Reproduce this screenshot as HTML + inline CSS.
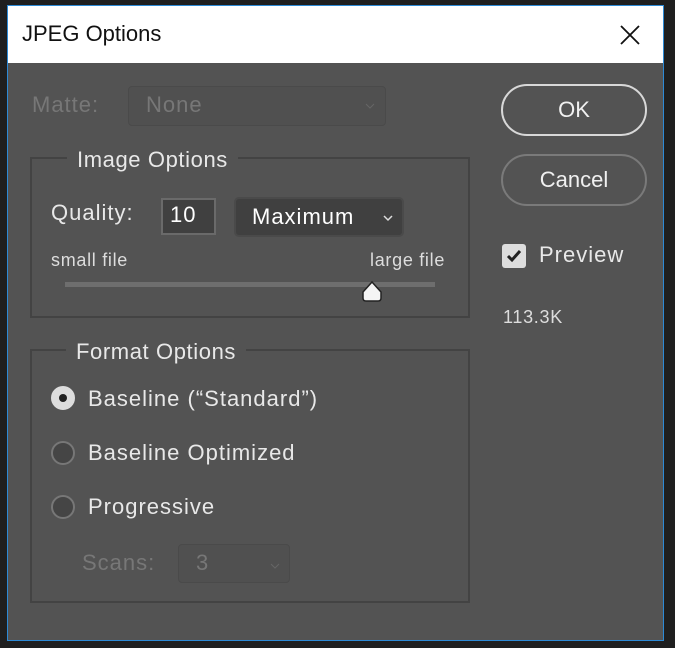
<!DOCTYPE html>
<html><head><meta charset="utf-8"><style>
*{margin:0;padding:0;box-sizing:border-box}
body{width:675px;height:648px;background:#1f1f1f;position:relative;overflow:hidden;font-family:"Liberation Sans",sans-serif}
.dlg{position:absolute;left:7px;top:5px;width:657px;height:636px;border:1px solid #2d8ad6;background:#535353}
.title{position:absolute;left:0;top:0;width:655px;height:57px;background:#fff}
.abs{position:absolute;white-space:nowrap}
.t{color:#e8e8e8;font-size:22px;letter-spacing:1px}
.dim{color:#777;font-size:22px;letter-spacing:1px}
.sm{color:#ddd;font-size:18px;letter-spacing:0.7px}
.grp{position:absolute;border:2px solid #434343}
.lg{position:absolute;background:#535353;padding:0 10px;color:#e8e8e8;font-size:22px;letter-spacing:0.6px}
.btn{position:absolute;border:2px solid #d8d8d8;border-radius:28px;color:#f0f0f0;font-size:22px;text-align:center}
.radio{position:absolute;width:24px;height:24px;border-radius:50%;border:2px solid #777;background:#454545}
</style></head><body>
<div class="dlg">
 <div class="title">
  <div class="abs" style="left:14px;top:15px;font-size:22px;color:#111">JPEG Options</div>
  <svg class="abs" style="left:611px;top:18px" width="22" height="22"><path d="M2 2L20 20M20 2L2 20" stroke="#111" stroke-width="1.8"/></svg>
 </div>
 <div class="abs dim" style="left:24px;top:86px">Matte:</div>
 <div class="abs" style="left:120px;top:80px;width:258px;height:40px;border:1px solid #4a4a4a;border-radius:4px;background:#505050"></div>
 <div class="abs dim" style="left:138px;top:86px">None</div>
 <svg class="abs" style="left:357px;top:97px" width="10" height="6"><path d="M1 1L5 5L9 1" stroke="#666" fill="none"/></svg>

 <div class="grp" style="left:22px;top:151px;width:440px;height:161px"></div>
 <div class="lg" style="left:59px;top:141px">Image Options</div>
 <div class="abs t" style="left:43px;top:194px">Quality:</div>
 <div class="abs" style="left:153px;top:192px;width:55px;height:37px;border:2px solid #6a6a6a;background:#404040"></div>
 <div class="abs t" style="left:162px;top:196px;color:#fff">10</div>
 <div class="abs" style="left:226px;top:191px;width:170px;height:40px;border:2px solid #4a4a4a;border-radius:5px;background:#404040"></div>
 <div class="abs t" style="left:244px;top:198px;color:#fff">Maximum</div>
 <svg class="abs" style="left:374px;top:208px" width="12" height="8"><path d="M2 2L6 6L10 2" stroke="#ddd" stroke-width="1.5" fill="none"/></svg>
 <div class="abs sm" style="left:43px;top:244px">small file</div>
 <div class="abs sm" style="left:362px;top:244px">large file</div>
 <div class="abs" style="left:57px;top:276px;width:370px;height:5px;background:#6e6e6e"></div>
 <svg class="abs" style="left:352px;top:274px" width="26" height="24"><path d="M12 2L3 12L3 18Q3 21 6 21L18 21Q21 21 21 18L21 12Z" fill="#f4f4f4" stroke="#222" stroke-width="1.5"/></svg>

 <div class="grp" style="left:22px;top:343px;width:440px;height:254px"></div>
 <div class="lg" style="left:58px;top:333px">Format Options</div>
 <div class="radio" style="left:43px;top:380px;background:#ddd;border-color:#ddd"></div>
 <div class="abs" style="left:51px;top:388px;width:8px;height:8px;border-radius:50%;background:#222"></div>
 <div class="abs t" style="left:80px;top:380px">Baseline (“Standard”)</div>
 <div class="radio" style="left:43px;top:435px"></div>
 <div class="abs t" style="left:80px;top:434px">Baseline Optimized</div>
 <div class="radio" style="left:43px;top:489px"></div>
 <div class="abs t" style="left:80px;top:488px">Progressive</div>
 <div class="abs dim" style="left:74px;top:544px">Scans:</div>
 <div class="abs" style="left:170px;top:538px;width:112px;height:39px;border:1px solid #4a4a4a;border-radius:4px;background:#505050"></div>
 <div class="abs dim" style="left:188px;top:544px">3</div>
 <svg class="abs" style="left:262px;top:557px" width="10" height="6"><path d="M1 1L5 5L9 1" stroke="#666" fill="none"/></svg>

 <div class="btn" style="left:493px;top:78px;width:146px;height:52px;line-height:48px">OK</div>
 <div class="btn" style="left:493px;top:148px;width:146px;height:52px;line-height:48px;border-color:#7a7a7a">Cancel</div>
 <div class="abs" style="left:494px;top:238px;width:24px;height:24px;border-radius:3px;background:#ddd"></div>
 <svg class="abs" style="left:497px;top:241px" width="18" height="18"><path d="M3 9L7 13L15 4" stroke="#222" stroke-width="3" fill="none"/></svg>
 <div class="abs t" style="left:531px;top:236px">Preview</div>
 <div class="abs sm" style="left:495px;top:301px">113.3K</div>
</div>
</body></html>
